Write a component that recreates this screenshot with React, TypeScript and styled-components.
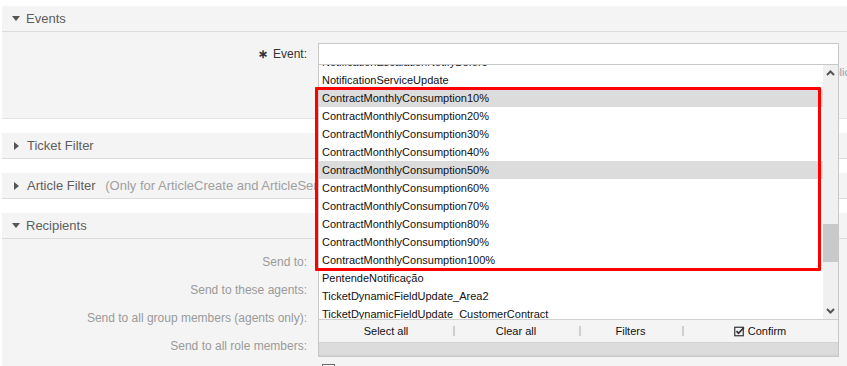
import styled, { createGlobalStyle } from 'styled-components';

const GlobalStyle = createGlobalStyle`
    html, body {
        margin: 0;
        padding: 0;
        background: #ffffff;
        overflow: hidden;
    }
    body {
        font-family: "Liberation Sans", Arial, sans-serif;
        color: #333333;
    }
`;

const Page = styled.div`
    position: relative;
    height: 366px;
    padding: 6px 0 0 2px;
    box-sizing: border-box;
    overflow: hidden;
`;

const Section = styled.div`
    background: #f4f4f4;
    margin-bottom: 14px;
`;

const Header = styled.div`
    display: flex;
    align-items: center;
    gap: 6px;
    height: 25px;
    padding-left: 10px;
    border-bottom: 1px solid #dcdcdc;
    font-size: 13px;
    color: #5e5e5e;
`;

const Caret = styled.span<{ open?: boolean }>`
    width: 0;
    height: 0;
    ${(p) => p.open
        ? `border-left: 4.5px solid transparent;
           border-right: 4.5px solid transparent;
           border-top: 5px solid #555;`
        : `border-top: 4.5px solid transparent;
           border-bottom: 4.5px solid transparent;
           border-left: 5px solid #555;
           margin: 0 2px 0 2px;`}
`;

const Muted = styled.span`
    color: #a0a0a0;
`;

const Content = styled.div<{ pad?: string; height?: string }>`
    padding: ${(p) => p.pad || '0'};
    height: ${(p) => p.height || 'auto'};
    border-bottom: 1px solid #e2e2e2;
    box-sizing: border-box;
`;

const Row = styled.div<{ h?: number }>`
    display: grid;
    grid-template-columns: 305px 521px;
    column-gap: 11px;
    align-items: center;
    height: ${(p) => p.h || 28}px;
`;

const Label = styled.div<{ dim?: boolean }>`
    text-align: right;
    font-size: 12px;
    color: ${(p) => (p.dim ? '#9a9a9a' : '#333333')};
    white-space: nowrap;
`;

const Star = styled.span`
    font-size: 12px;
    font-weight: bold;
    margin-right: 5px;
    color: #333;
`;

const Field = styled.div`
    position: relative;
    height: 22px;
    border: 1px solid #c8c8c8;
    background: #ffffff;
    box-sizing: border-box;
`;

const Dropdown = styled.div`
    position: absolute;
    top: 20px;
    left: -1px;
    width: 521px;
    border: 1px solid #c8c8c8;
    background: #ffffff;
    box-sizing: border-box;
    z-index: 2;
`;

const ListArea = styled.div`
    display: flex;
    height: 254px;
`;

const Viewport = styled.div`
    flex: 1;
    overflow: hidden;
`;

const List = styled.ul`
    list-style: none;
    margin: -12px 0 0 0;
    padding: 0;
`;

const Item = styled.li<{ active?: boolean }>`
    height: 18px;
    line-height: 18px;
    padding-left: 3px;
    font-size: 11px;
    color: #111111;
    background: ${(p) => (p.active ? '#dcdcdc' : 'transparent')};
    white-space: nowrap;
`;

const Track = styled.div`
    width: 15px;
    background: #f0f0f0;
    display: flex;
    flex-direction: column;
    justify-content: space-between;
    align-items: center;
    position: relative;
`;

const Arrow = styled.svg`
    width: 15px;
    height: 16px;
`;

const Thumb = styled.div`
    position: absolute;
    left: 0;
    right: 0;
    top: 159px;
    height: 38px;
    background: #c9c9c9;
`;

const Footer = styled.div`
    display: grid;
    grid-template-columns: 134px 126px 103px 156px;
    height: 22px;
    border-top: 1px solid #d0d0d0;
    background: #f4f4f4;
    font-size: 11px;
    color: #111;
`;

const FooterButton = styled.div<{ sep?: boolean }>`
    display: flex;
    align-items: center;
    justify-content: center;
    gap: 3px;
    position: relative;
    ${(p) => p.sep && `
        &::before {
            content: '';
            position: absolute;
            left: 0;
            top: 6px;
            height: 10px;
            width: 2px;
            background: #cfcfcf;
        }
    `}
`;

const BottomBar = styled.div`
    height: 13px;
    background: #dcdcdc;
    border-top: 1px solid #d4d4d4;
    box-shadow: inset 0 -1px 2px rgba(0, 0, 0, 0.06);
`;

const SideText = styled.span`
    position: absolute;
    left: 820px;
    top: 66px;
    font-size: 11px;
    color: #8aa0b4;
    white-space: nowrap;
    z-index: 1;
`;

const Checkbox = styled.div`
    width: 13px;
    height: 13px;
    border: 1px solid #666;
    background: #fff;
    box-sizing: border-box;
    align-self: start;
    margin-top: 4px;
    margin-left: 4px;
`;

const Highlight = styled.div`
    position: absolute;
    left: 315px;
    top: 87px;
    width: 506px;
    height: 184px;
    border: 3px solid #ff0000;
    border-radius: 1px;
    box-sizing: border-box;
    pointer-events: none;
    z-index: 5;
`;

const items = [
    'NotificationEscalationNotifyBefore',
    'NotificationServiceUpdate',
    'ContractMonthlyConsumption10%',
    'ContractMonthlyConsumption20%',
    'ContractMonthlyConsumption30%',
    'ContractMonthlyConsumption40%',
    'ContractMonthlyConsumption50%',
    'ContractMonthlyConsumption60%',
    'ContractMonthlyConsumption70%',
    'ContractMonthlyConsumption80%',
    'ContractMonthlyConsumption90%',
    'ContractMonthlyConsumption100%',
    'PentendeNotificação',
    'TicketDynamicFieldUpdate_Area2',
    'TicketDynamicFieldUpdate_CustomerContract',
    'TicketDynamicFieldUpdate_Priority',
];

const active = ['ContractMonthlyConsumption10%', 'ContractMonthlyConsumption50%'];

function CheckSquare() {
    return (
        <svg width="11" height="11" viewBox="0 0 11 11">
            <rect x="0.75" y="1.25" width="8.5" height="8.5" fill="none" stroke="#333" strokeWidth="1.2" />
            <polyline points="2.5,5.2 4.5,7.3 10,1.5" fill="none" stroke="#333" strokeWidth="1.8" />
        </svg>
    );
}

export default function App() {
    return (
        <Page>
            <GlobalStyle />
            <Section>
                <Header><Caret open />Events</Header>
                <Content pad="11px 0 0 0" height="87px">
                    <Row h={22}>
                        <Label><Star>∗</Star>Event:</Label>
                        <Field>
                            <Dropdown>
                                <ListArea>
                                    <Viewport>
                                        <List>
                                            {items.map((it) => (
                                                <Item key={it} active={active.includes(it)}>{it}</Item>
                                            ))}
                                        </List>
                                    </Viewport>
                                    <Track>
                                        <Arrow viewBox="0 0 15 16">
                                            <polyline points="4,10 7.5,6.5 11,10" fill="none" stroke="#555" strokeWidth="2" />
                                        </Arrow>
                                        <Thumb />
                                        <Arrow viewBox="0 0 15 16">
                                            <polyline points="4,6 7.5,9.5 11,6" fill="none" stroke="#555" strokeWidth="2" />
                                        </Arrow>
                                    </Track>
                                </ListArea>
                                <Footer>
                                    <FooterButton>Select all</FooterButton>
                                    <FooterButton sep>Clear all</FooterButton>
                                    <FooterButton sep>Filters</FooterButton>
                                    <FooterButton sep><CheckSquare />Confirm</FooterButton>
                                </Footer>
                                <BottomBar />
                            </Dropdown>
                        </Field>
                    </Row>
                </Content>
            </Section>
            <Section>
                <Header><Caret />Ticket Filter</Header>
            </Section>
            <Section>
                <Header><Caret />Article Filter&nbsp;<Muted>(Only for ArticleCreate and ArticleSend events)</Muted></Header>
            </Section>
            <Section>
                <Header><Caret open />Recipients</Header>
                <Content pad="9px 0 0 0" height="140px">
                    <Row><Label dim>Send to:</Label><div /></Row>
                    <Row><Label dim>Send to these agents:</Label><div /></Row>
                    <Row><Label dim>Send to all group members (agents only):</Label><div /></Row>
                    <Row><Label dim>Send to all role members:</Label><div /></Row>
                    <Row><Label dim /><Checkbox /></Row>
                </Content>
            </Section>
            <SideText>Public</SideText>
            <Highlight />
        </Page>
    );
}
